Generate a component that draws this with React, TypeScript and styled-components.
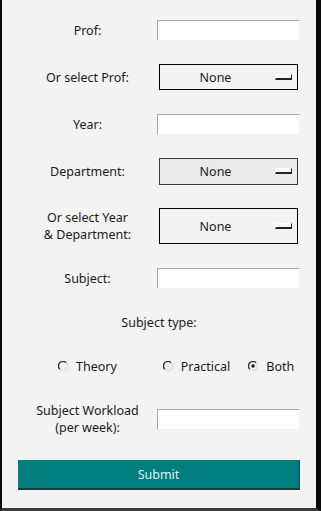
import React, { useState } from 'react';
import styled, { createGlobalStyle } from 'styled-components';

const GlobalStyle = createGlobalStyle`
	html, body {
		margin: 0;
		padding: 0;
		background: #f0f0f0;
	}
	body {
		font-family: "Noto Sans", "Open Sans", sans-serif;
	}
`;

const Window = styled.div`
	width: 321px;
	height: 511px;
	box-sizing: border-box;
	background: #f3f3f3;
	border-left: 2px solid #0a0a0a;
	border-right: 5px solid #0a0a0a;
	border-bottom: 3px solid #3c3c3c;
	padding: 10px 16px 0 16px;
	display: flex;
	flex-direction: column;
	font-size: 12.5px;
	color: #1a1a1a;
`;

const Row = styled.div<{ $h: number }>`
	display: grid;
	grid-template-columns: 139px 143px;
	align-items: center;
	height: ${p => p.$h}px;
`;

const Label = styled.div`
	text-align: center;
	line-height: 17px;
`;

const Heading = styled.div<{ $h: number }>`
	height: ${p => p.$h}px;
	display: flex;
	align-items: center;
	justify-content: center;
`;

const Entry = styled.input`
	box-sizing: border-box;
	width: 143px;
	height: 21px;
	margin: 0;
	padding: 0 3px;
	background: #ffffff;
	border: 1px solid #f1f1f1;
	border-top-color: #a9a9a9;
	border-left-color: #a9a9a9;
	outline: none;
	font: inherit;
`;

const Menu = styled.div<{ $h: number; $dim?: boolean }>`
	box-sizing: border-box;
	margin: 0 2px;
	height: ${p => p.$h}px;
	display: flex;
	align-items: center;
	background: ${p => (p.$dim ? '#eaeaea' : '#f3f3f3')};
	border: 1px solid ${p => (p.$dim ? '#3a3a3a' : '#000000')};
	cursor: default;
`;

const MenuText = styled.span`
	flex: 1;
	text-align: center;
	padding-right: 4px;
`;

const Indicator = styled.span`
	width: 15px;
	height: 3px;
	margin-right: 5px;
	background: #f7f7f7;
	border: 1px solid #ffffff;
	border-right-color: #222;
	border-bottom-color: #222;
	border-bottom-width: 2px;
`;

const RadioCell = styled.div`
	display: flex;
	justify-content: center;
	gap: 18px;
`;

const RadioItem = styled.label`
	display: flex;
	align-items: center;
	gap: 8px;
	cursor: default;
`;

const Submit = styled.button`
	margin-top: 12px;
	height: 30px;
	box-sizing: border-box;
	background: #007d7d;
	color: #dff2f2;
	border: none;
	border-bottom: 2px solid #163c3c;
	border-right: 1px solid #1f4545;
	font: inherit;
	padding: 0;
`;

const RadioMark = ({ checked }: { checked: boolean }) => (
	<svg width="10" height="10" viewBox="0 0 10 10">
		<path d="M8.2 1.8 A4.5 4.5 0 0 0 1.8 8.2" fill="none" stroke="#2a2a2a" strokeWidth="1.3" />
		<path d="M1.8 8.2 A4.5 4.5 0 0 0 8.2 1.8" fill="none" stroke="#dcdcdc" strokeWidth="1.3" />
		{checked && <circle cx="5" cy="5" r="1.7" fill="#111" />}
	</svg>
);

const App = () => {
	const [kind, setKind] = useState('both');

	const Radio = ({ value, text }: { value: string; text: string }) => (
		<RadioItem onClick={() => setKind(value)}>
			<RadioMark checked={kind === value} />
			{text}
		</RadioItem>
	);

	return (
		<>
			<GlobalStyle />
			<Window>
				<Row $h={40}>
					<Label>Prof:</Label>
					<Entry />
				</Row>
				<Row $h={54}>
					<Label>Or select Prof:</Label>
					<Menu $h={26}><MenuText>None</MenuText><Indicator /></Menu>
				</Row>
				<Row $h={40}>
					<Label>Year:</Label>
					<Entry />
				</Row>
				<Row $h={54}>
					<Label>Department:</Label>
					<Menu $h={27} $dim><MenuText>None</MenuText><Indicator /></Menu>
				</Row>
				<Row $h={56}>
					<Label>Or select Year<br />&amp; Department:</Label>
					<Menu $h={36}><MenuText>None</MenuText><Indicator /></Menu>
				</Row>
				<Row $h={48}>
					<Label>Subject:</Label>
					<Entry />
				</Row>
				<Heading $h={40}>Subject type:</Heading>
				<Row $h={48}>
					<RadioCell><Radio value="theory" text="Theory" /></RadioCell>
					<RadioCell>
						<Radio value="practical" text="Practical" />
						<Radio value="both" text="Both" />
					</RadioCell>
				</Row>
				<Row $h={58}>
					<Label>Subject Workload<br />(per week):</Label>
					<Entry />
				</Row>
				<Submit>Submit</Submit>
			</Window>
		</>
	);
};

export default App;
